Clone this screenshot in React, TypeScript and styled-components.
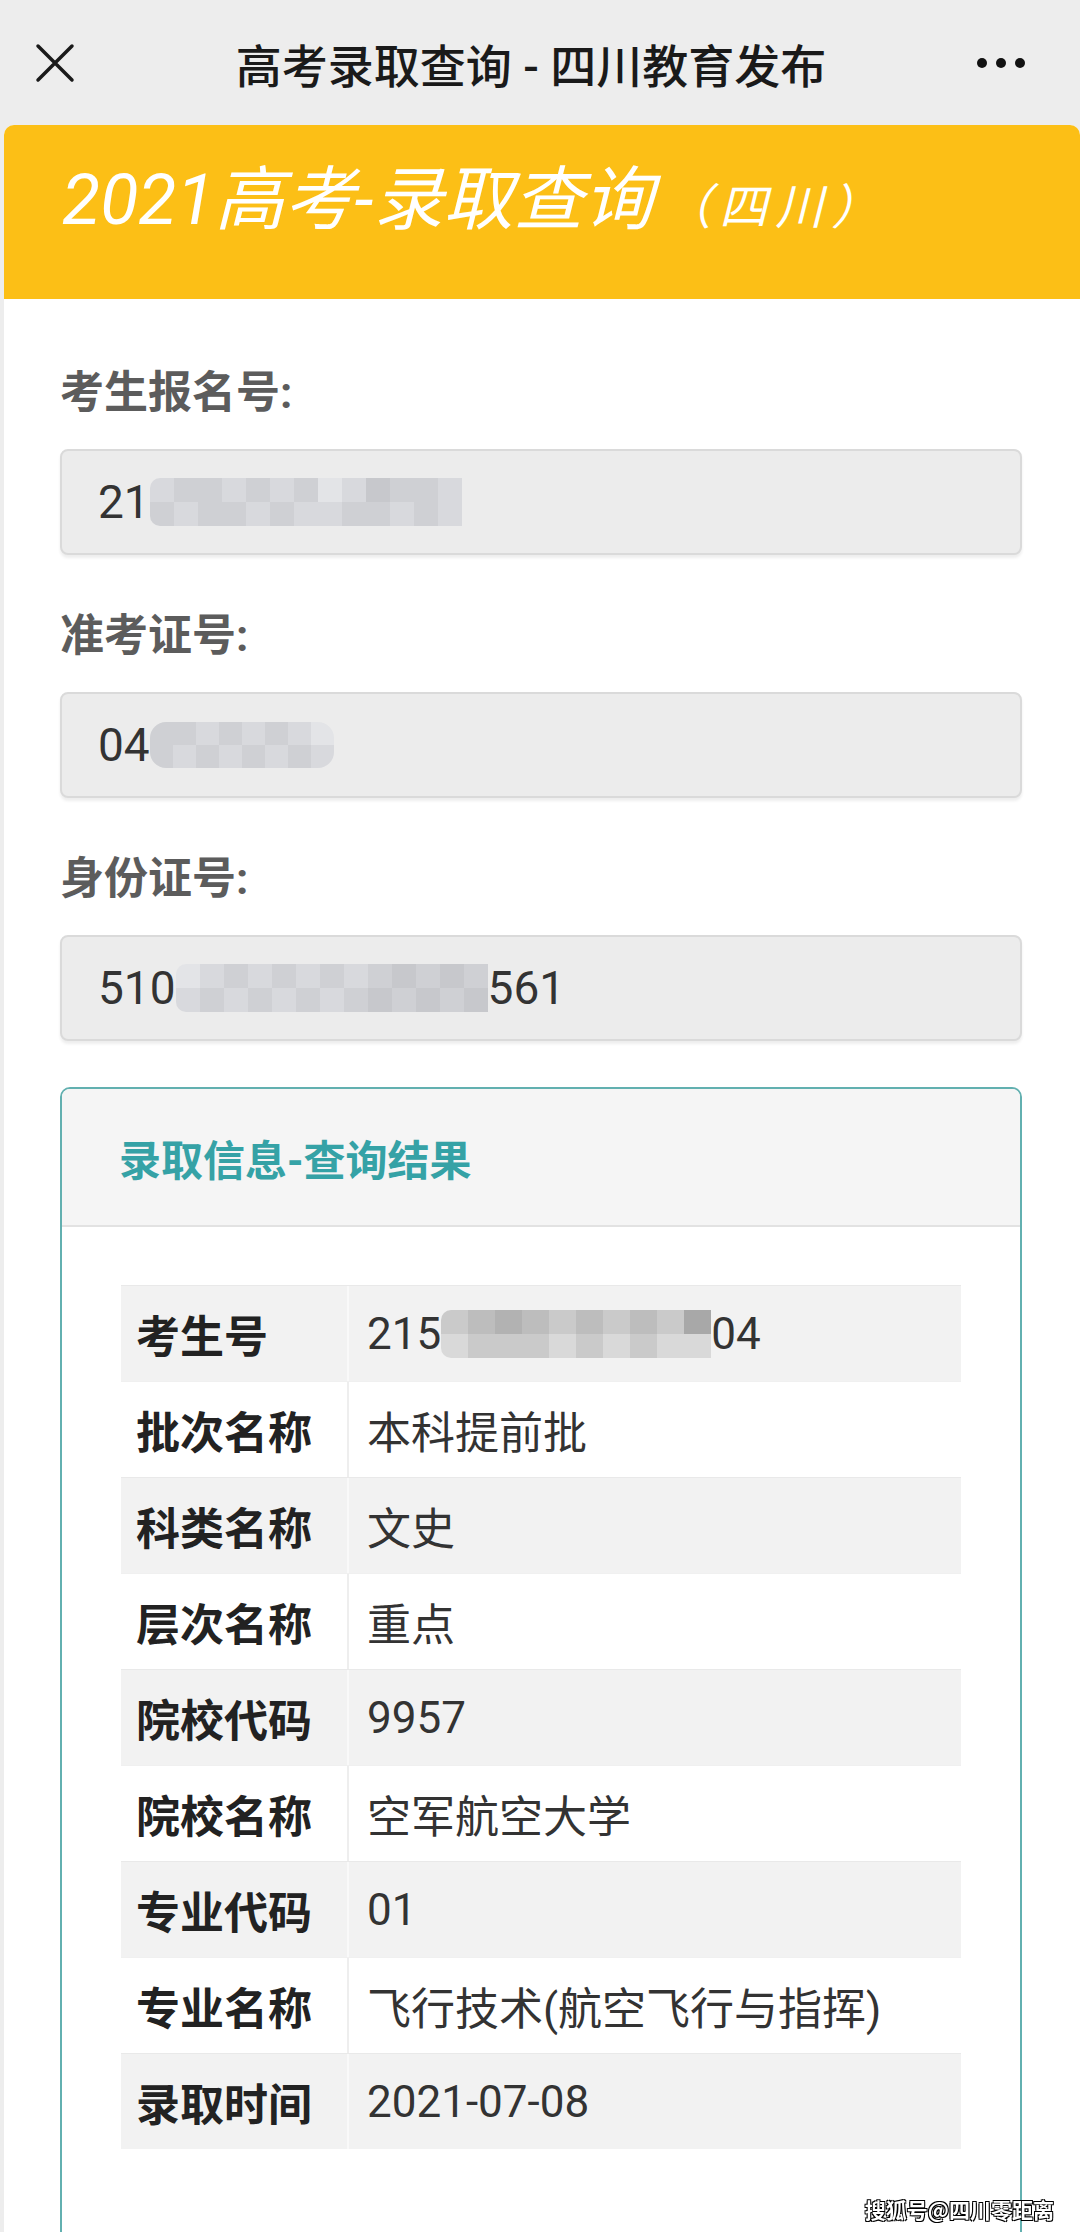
import styled, { createGlobalStyle } from "styled-components";

const GlobalStyle = createGlobalStyle`
  html, body {
    margin: 0;
    padding: 0;
  }
  body {
    background: #ededed;
    font-family: Roboto, "Noto Sans CJK SC", sans-serif;
    -webkit-font-smoothing: antialiased;
  }
  * {
    box-sizing: border-box;
  }
`;

const NavBar = styled.div`
  height: 125px;
  display: grid;
  grid-template-columns: 1fr auto 1fr;
  align-items: center;
  padding: 0 53px 0 35px;
`;

const NavTitle = styled.div`
  font-size: 46px;
  font-weight: 500;
  color: #1a1a1a;
  white-space: nowrap;
`;

const NavSide = styled.div<{ $end?: boolean }>`
  display: flex;
  justify-content: ${(p) => (p.$end ? "flex-end" : "flex-start")};
  align-items: center;
`;

const Page = styled.div`
  margin-left: 4px;
  background: #fff;
  border-radius: 10px 10px 0 0;
  overflow: hidden;
  min-height: 2107px;
`;

const Banner = styled.div`
  height: 174px;
  background: #fcbf16;
  padding: 34px 0 0 58px;
  color: #fff;
  font-style: italic;
  white-space: nowrap;
  h1 {
    margin: 0;
    font-size: 70px;
    font-weight: 400;
    line-height: 83px;
    span {
      font-size: 48px;
      letter-spacing: 8px;
      margin-left: 10px;
    }
  }
`;

const Form = styled.div`
  display: flex;
  flex-direction: column;
  gap: 51px;
  padding: 64px 58px 0 56px;
`;

const Field = styled.div`
  display: flex;
  flex-direction: column;
`;

const Label = styled.div`
  font-size: 44px;
  line-height: 60px;
  font-weight: 700;
  color: #5c5c5c;
  margin-bottom: 26px;
`;

const InputBox = styled.div`
  height: 106px;
  display: flex;
  align-items: center;
  padding-left: 36px;
  background: #ececec;
  border: 2px solid #dadada;
  border-radius: 8px;
  box-shadow: 0 3px 3px rgba(0, 0, 0, 0.07);
  font-size: 46px;
  color: #333;
`;

const Panel = styled.div`
  margin: 46px 58px 0 56px;
  border: 2px solid #62b0b0;
  border-radius: 10px;
  overflow: hidden;
  padding-bottom: 140px;
`;

const PanelHead = styled.div`
  height: 138px;
  display: flex;
  align-items: center;
  padding-left: 57px;
  background: #f5f5f5;
  border-bottom: 2px solid #e2e2e2;
  font-size: 42px;
  font-weight: 700;
  color: #35a2a6;
`;

const Table = styled.div`
  margin: 58px 59px 0;
  display: flex;
  flex-direction: column;
`;

const Row = styled.div<{ $odd: boolean }>`
  display: grid;
  grid-template-columns: 228px 1fr;
  height: 96px;
  background: ${(p) => (p.$odd ? "#f2f2f2" : "#fff")};
  border-top: 1px solid ${(p) => (p.$odd ? "#e9e9e9" : "#f0f0f0")};
  font-size: 44px;
`;

const HeadCell = styled.div<{ $odd: boolean }>`
  display: flex;
  align-items: center;
  padding-left: 15px;
  font-weight: 700;
  color: #222;
  border-right: 2px solid ${(p) => (p.$odd ? "#f9f9f9" : "#eeeeee")};
`;

const ValueCell = styled.div`
  display: flex;
  align-items: center;
  padding-left: 18px;
  color: #333;
`;

const MosaicGrid = styled.span<{ $cols: number; $w: number; $h: number; $round?: boolean }>`
  display: inline-grid;
  grid-template-columns: repeat(${(p) => p.$cols}, ${(p) => p.$w}px);
  grid-auto-rows: ${(p) => p.$h}px;
  border-radius: ${(p) => (p.$round ? "16px" : "10px 0 0 10px")};
  overflow: hidden;
`;

const MosaicCell = styled.span<{ $c: string }>`
  background: ${(p) => p.$c};
`;

const Watermark = styled.div`
  position: fixed;
  right: 26px;
  bottom: 8px;
  font-size: 21px;
  font-weight: 700;
  color: #fff;
  text-shadow: 1px 1px 0 #000, -1px -1px 0 #000, 1px -1px 0 #000, -1px 1px 0 #000;
  font-family: "Noto Sans CJK SC", sans-serif;
`;

const lightTone = ["#e3e4e7", "#d8d9dd", "#cfd0d4", "#c7c8cc", "#bebfc3"];
const darkTone = ["#d9d9d9", "#cacaca", "#bdbdbd", "#b2b2b2", "#a8a8a8"];

function Mosaic(props: {
  pattern: string;
  w: number;
  h: number;
  dark?: boolean;
  round?: boolean;
}) {
  const rows = props.pattern.split("/");
  const tone = props.dark ? darkTone : lightTone;
  return (
    <MosaicGrid $cols={rows[0].length} $w={props.w} $h={props.h} $round={props.round}>
      {rows.flatMap((r, i) =>
        r.split("").map((d, j) => <MosaicCell key={`${i}-${j}`} $c={tone[Number(d)]} />)
      )}
    </MosaicGrid>
  );
}

const CloseIcon = () => (
  <svg width="40" height="40" viewBox="0 0 40 40">
    <path d="M3 3 L37 37 M37 3 L3 37" stroke="#1a1a1a" strokeWidth="3.5" strokeLinecap="round" />
  </svg>
);

const MoreIcon = () => (
  <svg width="50" height="12" viewBox="0 0 50 12">
    <circle cx="5" cy="6" r="5" fill="#111" />
    <circle cx="24" cy="6" r="5" fill="#111" />
    <circle cx="43" cy="6" r="5" fill="#111" />
  </svg>
);

const results: [string, string][] = [
  ["批次名称", "本科提前批"],
  ["科类名称", "文史"],
  ["层次名称", "重点"],
  ["院校代码", "9957"],
  ["院校名称", "空军航空大学"],
  ["专业代码", "01"],
  ["专业名称", "飞行技术(航空飞行与指挥)"],
  ["录取时间", "2021-07-08"],
];

export default function App() {
  return (
    <>
      <GlobalStyle />
      <NavBar>
        <NavSide>
          <CloseIcon />
        </NavSide>
        <NavTitle>高考录取查询 - 四川教育发布</NavTitle>
        <NavSide $end>
          <MoreIcon />
        </NavSide>
      </NavBar>
      <Page>
        <Banner>
          <h1>
            2021高考-录取查询<span>（四川）</span>
          </h1>
        </Banner>
        <Form>
          <Field>
            <Label>考生报名号:</Label>
            <InputBox>
              21
              <Mosaic pattern="1221212013221/2122121122121" w={24} h={24} />
            </InputBox>
          </Field>
          <Field>
            <Label>准考证号:</Label>
            <InputBox>
              04
              <Mosaic pattern="22121210/21212121" w={23} h={23} round />
            </InputBox>
          </Field>
          <Field>
            <Label>身份证号:</Label>
            <InputBox>
              510
              <Mosaic pattern="0121212123232/1212121232323" w={24} h={24} />
              561
            </InputBox>
          </Field>
        </Form>
        <Panel>
          <PanelHead>录取信息-查询结果</PanelHead>
          <Table>
            <Row $odd>
              <HeadCell $odd>考生号</HeadCell>
              <ValueCell>
                215
                <Mosaic pattern="1232121214/0111010100" w={27} h={24} dark />
                04
              </ValueCell>
            </Row>
            {results.map(([k, v], i) => (
              <Row key={k} $odd={i % 2 === 1}>
                <HeadCell $odd={i % 2 === 1}>{k}</HeadCell>
                <ValueCell>{v}</ValueCell>
              </Row>
            ))}
          </Table>
        </Panel>
      </Page>
      <Watermark>搜狐号@四川零距离</Watermark>
    </>
  );
}
